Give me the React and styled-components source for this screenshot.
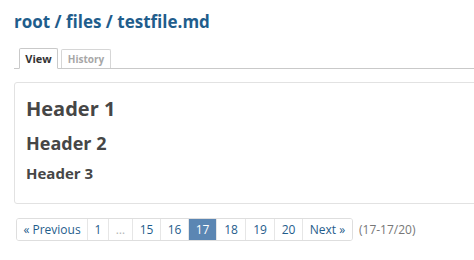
import React from "react";
import styled, { createGlobalStyle } from "styled-components";

const Global = createGlobalStyle`
  * { box-sizing: border-box; }
  html, body { margin: 0; padding: 0; background: #fff; }
  body { font-family: "Open Sans", "DejaVu Sans", sans-serif; color: #444; overflow: hidden; }
`;

const Page = styled.div`
  padding: 9px 0 0 14px;
  width: 490px;
`;

const Crumbs = styled.h1`
  margin: 0;
  font-size: 17px;
  line-height: 26px;
  font-weight: 700;
  color: #1f5d8c;
`;

const Tabs = styled.div`
  display: flex;
  align-items: flex-end;
  gap: 3px;
  margin-top: 13px;
  padding-left: 5px;
  border-bottom: 1px solid #c9c9c9;
  height: 21px;
`;

const Tab = styled.div`
  display: flex;
  justify-content: center;
  width: ${(p) => p.$w}px;
  font-size: ${(p) => (p.$active ? "11px" : "10px")};
  font-weight: 700;
  height: ${(p) => (p.$active ? "21px" : "19px")};
  line-height: ${(p) => (p.$active ? "20px" : "18px")};
  color: ${(p) => (p.$active ? "#333" : "#a7a7a7")};
  background: #fff;
  border: 1px solid ${(p) => (p.$active ? "#c9c9c9" : "#d6d6d6")};
  border-bottom: ${(p) => (p.$active ? "1px solid #fff" : "none")};
  margin-bottom: ${(p) => (p.$active ? "-1px" : "0")};
  border-radius: 2px 2px 0 0;
`;

const Panel = styled.div`
  margin-top: 13px;
  border: 1px solid #e2e2e2;
  border-radius: 3px;
  padding: 11px 11px 12px;
  height: 122px;
  width: 480px;
`;

const Heading = styled.div`
  font-weight: 700;
  color: #464646;
  font-size: ${(p) => p.$size}px;
  line-height: ${(p) => p.$lh}px;
  margin-bottom: ${(p) => p.$mb}px;
`;

const PagerRow = styled.div`
  display: flex;
  align-items: center;
  margin-top: 14px;
  padding-left: 2px;
`;

const Pager = styled.div`
  display: flex;
  border: 1px solid #dedede;
  border-radius: 3px;
  overflow: hidden;
  height: 23px;
`;

const PageItem = styled.span`
  display: flex;
  align-items: center;
  justify-content: center;
  width: ${(p) => p.$w}px;
  padding: 0;
  font-size: 12px;
  color: ${(p) => (p.$active ? "#fff" : p.$muted ? "#b5b5b5" : "#1f5d8c")};
  background: ${(p) => (p.$active ? "#5b86b3" : "#fff")};
  border-left: ${(p) => (p.$first ? "none" : "1px solid #e6e6e6")};
`;

const Count = styled.span`
  margin-left: 6px;
  font-size: 12px;
  color: #777;
`;

export default function App() {
  const pages = [
    { t: "« Previous", w: 70, first: true },
    { t: "1", w: 21 },
    { t: "…", w: 24, muted: true },
    { t: "15", w: 28 },
    { t: "16", w: 28 },
    { t: "17", w: 28, active: true },
    { t: "18", w: 29 },
    { t: "19", w: 29 },
    { t: "20", w: 28 },
    { t: "Next »", w: 50 },
  ];
  return (
    <Page>
      <Global />
      <Crumbs>root / files / testfile.md</Crumbs>
      <Tabs>
        <Tab $active $w={39}>View</Tab>
        <Tab $w={50}>History</Tab>
      </Tabs>
      <Panel>
        <Heading $size={20} $lh={30} $mb={6}>Header 1</Heading>
        <Heading $size={18} $lh={26} $mb={6}>Header 2</Heading>
        <Heading $size={15} $lh={22} $mb={0}>Header 3</Heading>
      </Panel>
      <PagerRow>
        <Pager>
          {pages.map((p) => (
            <PageItem key={p.t} $w={p.w} $first={p.first} $active={p.active} $muted={p.muted}>
              {p.t}
            </PageItem>
          ))}
        </Pager>
        <Count>(17-17/20)</Count>
      </PagerRow>
    </Page>
  );
}
